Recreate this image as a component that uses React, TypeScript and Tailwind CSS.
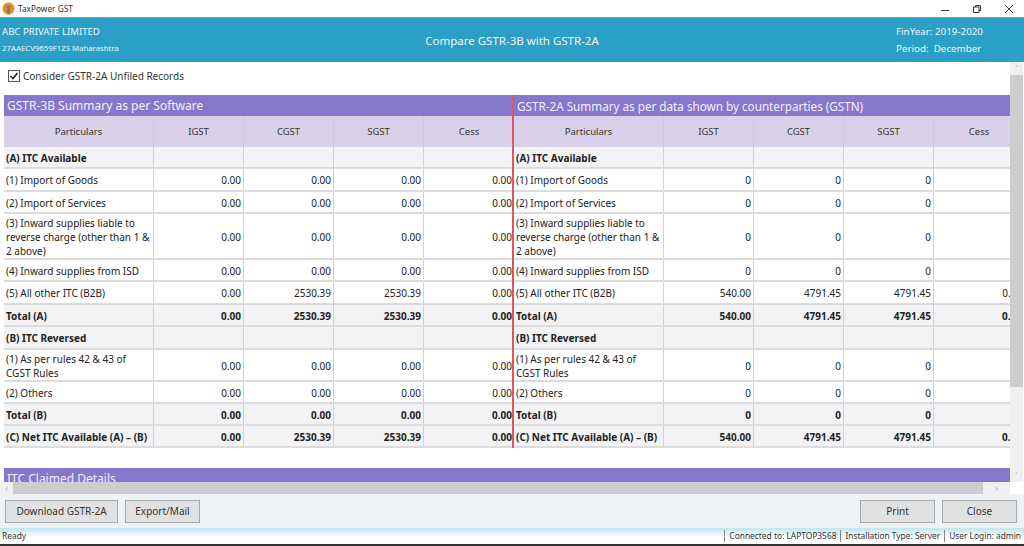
import React from 'react';

type Row = {
  label: React.ReactNode;
  h: string;
  vals: string[];
  kind?: 'head' | 'total';
};

const rowH = ['h-[22px]', 'h-[23px]', 'h-[22px]', 'h-[46px]', 'h-[22px]', 'h-[23px]', 'h-[22px]', 'h-[23px]', 'h-[32px]', 'h-[22px]', 'h-[22px]', 'h-[22px]'];

const inwardLabel = <>(3) Inward supplies liable to<br />reverse charge (other than 1 &amp;<br />2 above)</>;
const rulesLabel = <>(1) As per rules 42 &amp; 43 of<br />CGST Rules</>;

const labels: { label: React.ReactNode; kind?: 'head' | 'total' }[] = [
  { label: '(A) ITC Available', kind: 'head' },
  { label: '(1) Import of Goods' },
  { label: '(2) Import of Services' },
  { label: inwardLabel },
  { label: '(4) Inward supplies from ISD' },
  { label: '(5) All other ITC (B2B)' },
  { label: 'Total (A)', kind: 'total' },
  { label: '(B) ITC Reversed', kind: 'head' },
  { label: rulesLabel },
  { label: '(2) Others' },
  { label: 'Total (B)', kind: 'total' },
  { label: '(C) Net ITC Available (A) – (B)', kind: 'total' },
];

const z = ['0.00', '0.00', '0.00', '0.00'];
const leftVals = [
  ['', '', '', ''], z, z, z, z,
  ['0.00', '2530.39', '2530.39', '0.00'],
  ['0.00', '2530.39', '2530.39', '0.00'],
  ['', '', '', ''], z, z, z,
  ['0.00', '2530.39', '2530.39', '0.00'],
];
const n = ['0', '0', '0', ''];
const rightVals = [
  ['', '', '', ''], n, n, n, n,
  ['540.00', '4791.45', '4791.45', '0.00'],
  ['540.00', '4791.45', '4791.45', '0.00'],
  ['', '', '', ''], n, n,
  ['0', '0', '0', ''],
  ['540.00', '4791.45', '4791.45', '0.00'],
];

function makeRows(vals: string[][]): Row[] {
  return labels.map((l, i) => ({ label: l.label, kind: l.kind, h: rowH[i], vals: vals[i] }));
}

function SummaryTable({ title, rows, divider, titleSize }: { title: string; rows: Row[]; divider?: boolean; titleSize: string }) {
  return (
    <div className={`w-[510px] shrink-0 ${divider ? 'border-r-2 border-[#e0565f]' : ''}`}>
      <div className={`h-[21px] bg-[#8676cd] text-[#f4f2fb] ${titleSize} leading-[22px] pl-[3px] whitespace-nowrap`}>{title}</div>
      <div className="flex h-[31px] bg-[#d9d1e9] text-[9.5px] text-[#333] items-center text-center">
        <div className="w-[150px] shrink-0 h-full leading-[31px] border-r border-[#cfc9dc]">Particulars</div>
        {['IGST', 'CGST', 'SGST', 'Cess'].map((c) => (
          <div key={c} className="w-[90px] shrink-0 h-full leading-[31px] border-r border-[#cfc9dc] last:border-r-0">{c}</div>
        ))}
      </div>
      {rows.map((r, i) => {
        const shaded = !!r.kind;
        return (
          <div
            key={i}
            className={`flex ${r.h} border-b-2 border-[#dcdcdc] pt-[1px] text-[10px] leading-[14px] text-[#222] ${shaded ? 'bg-[#f3f3f5] font-bold' : 'bg-white'}`}
          >
            <div className="w-[150px] shrink-0 flex items-center pl-[2px] -mt-[1px] pt-[1px] border-r border-[#d2d2d2] whitespace-nowrap">
              <span>{r.label}</span>
            </div>
            {r.vals.map((v, j) => (
              <div key={j} className="w-[90px] shrink-0 flex items-center justify-end pr-[2px] -mt-[1px] pt-[1px] border-r border-[#d2d2d2] last:border-r-0">
                {v}
              </div>
            ))}
          </div>
        );
      })}
    </div>
  );
}

function Btn({ children, w }: { children: React.ReactNode; w: string }) {
  return (
    <button className={`${w} h-[23px] bg-[#e1e1e1] border border-[#a8a8a8] text-[10px] text-[#333]`}>{children}</button>
  );
}

export default function App() {
  return (
    <div
      className="w-[1024px] h-[546px] overflow-hidden flex flex-col bg-white text-[#222]"
      style={{ fontFamily: '"Noto Sans", "Open Sans", sans-serif' }}
    >
      {/* title bar */}
      <div className="h-[17px] flex items-center bg-white">
        <svg width="13" height="13" viewBox="0 0 13 13" className="ml-[2px]">
          <circle cx="6.5" cy="6.5" r="6" fill="#f08a24" />
          <path d="M3 3.5h7L8 6v6.2H5V6z" fill="#8a7a6a" />
        </svg>
        <span className="ml-[3px] text-[8.3px] text-[#333] pt-[1px]">TaxPower GST</span>
        <div className="ml-auto flex items-center gap-[22px] pr-[10px]">
          <svg width="10" height="10" viewBox="0 0 10 10"><path d="M1 6.5h8" stroke="#444" /></svg>
          <svg width="10" height="10" viewBox="0 0 10 10" fill="none" stroke="#333">
            <path d="M1.5 3h5.5v5.5H1.5zM3.5 3V1.5h5v5H7" />
          </svg>
          <svg width="10" height="10" viewBox="0 0 10 10" stroke="#444"><path d="M1 1l8 8M9 1l-8 8" /></svg>
        </div>
      </div>

      {/* header */}
      <div className="h-[45px] bg-[#2b9fc5] text-[#eef8fb] flex items-center border-t border-[#55b5d4]">
        <div className="w-[128px] pl-[2px] whitespace-nowrap">
          <div className="text-[9.6px] leading-[16px]">ABC PRIVATE LIMITED</div>
          <div className="text-[7.8px] leading-[16px]">27AAECV9659F1ZS Maharashtra</div>
        </div>
        <div className="flex-1 text-center text-[11.5px] pt-[2px]">Compare GSTR-3B with GSTR-2A</div>
        <div className="w-[128px] text-[9.8px] leading-[17px]">
          <div>FinYear: 2019-2020</div>
          <div>Period:&nbsp; December</div>
        </div>
      </div>

      {/* scrolling content */}
      <div className="h-[432px] flex">
        <div className="w-[1010px] flex flex-col">
          <div className="h-[420px] overflow-hidden">
            <div className="h-[33px] flex items-start pt-[8px] pl-[8px] gap-[3px] text-[10px] leading-[13px] text-[#333]">
              <span className="w-[12px] h-[12px] border border-[#555] flex items-center justify-center bg-white">
                <svg width="10" height="10" viewBox="0 0 10 10" fill="none" stroke="#222" strokeWidth="1.6">
                  <path d="M1.5 5l2.5 2.5L8.5 2" />
                </svg>
              </span>
              Consider GSTR-2A Unfiled Records
            </div>
            <div className="flex pl-[4px] overflow-hidden">
              <SummaryTable title="GSTR-3B Summary as per Software" rows={makeRows(leftVals)} divider titleSize="text-[12px]" />
              <SummaryTable title="GSTR-2A Summary as per data shown by counterparties (GSTN)" rows={makeRows(rightVals)} titleSize="text-[11.7px]" />
            </div>
            <div className="mt-[20px] ml-[4px] h-[20px] bg-[#8676cd] text-[#f4f2fb] text-[12px] leading-[22px] pl-[3px]">ITC Claimed Details</div>
          </div>
          {/* horizontal scrollbar */}
          <div className="h-[12px] flex bg-[#f0f0f0] items-center">
            <div className="w-[13px] text-center text-[8px] leading-[12px] text-[#999]">‹</div>
            <div className="w-[970px] h-full bg-[#cdcdcd]" />
            <div className="flex-1 text-center text-[8px] leading-[12px] text-[#999]">›</div>
          </div>
        </div>
        {/* vertical scrollbar */}
        <div className="w-[13px] h-[420px] bg-[#f0f0f0] flex flex-col">
          <div className="h-[13px] text-center text-[8px] leading-[13px] text-[#999]">˄</div>
          <div className="h-[312px] bg-[#cdcdcd]" />
          <div className="mt-auto h-[13px] text-center text-[8px] leading-[13px] text-[#999]">˅</div>
        </div>
      </div>

      {/* footer */}
      <div className="h-[34px] bg-[#eef3f5] flex items-center pl-[5px] pr-[7px] gap-[7px]">
        <Btn w="w-[113px]">Download GSTR-2A</Btn>
        <Btn w="w-[75px]">Export/Mail</Btn>
        <div className="flex-1" />
        <Btn w="w-[75px]">Print</Btn>
        <Btn w="w-[75px]">Close</Btn>
      </div>

      {/* status bar */}
      <div className="h-[16px] flex items-center text-[8.4px] text-[#333] bg-gradient-to-b from-[#bfe6ee] to-white to-60%">
        <span className="pl-[2px]">Ready</span>
        <div className="ml-auto flex h-full items-center pr-[3px]">
          <span className="border-l border-[#888] pl-[4px] pr-[4px]">Connected to: LAPTOP3568</span>
          <span className="border-l border-[#888] pl-[4px] pr-[4px]">Installation Type: Server</span>
          <span className="border-l border-[#888] pl-[4px]">User Login: admin</span>
        </div>
      </div>
      <div className="flex-1 bg-[#333]" />
    </div>
  );
}
